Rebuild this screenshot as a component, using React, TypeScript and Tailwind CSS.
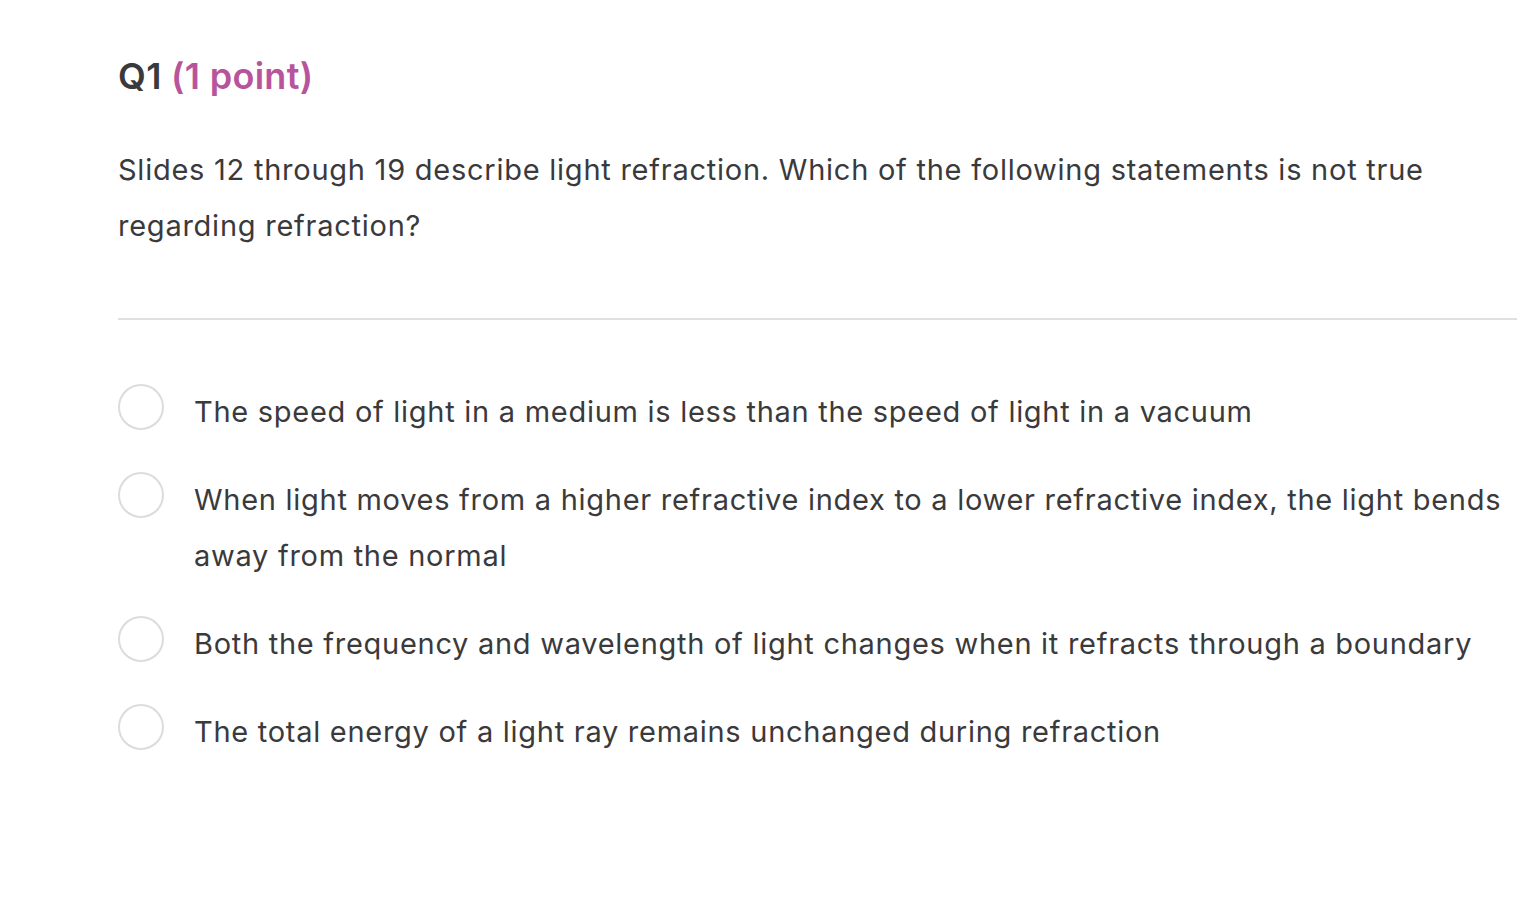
import React from 'react';

const options = [
  'The speed of light in a medium is less than the speed of light in a vacuum',
  'When light moves from a higher refractive index to a lower refractive index, the light bends away from the normal',
  'Both the frequency and wavelength of light changes when it refracts through a boundary',
  'The total energy of a light ray remains unchanged during refraction',
];

const Radio: React.FC = () => (
  <span className="block w-[46px] h-[46px] shrink-0 rounded-full border-2 border-[#dcdce0] bg-white" />
);

export default function App() {
  return (
    <div
      className="min-h-screen bg-white pl-[118px] pr-[21px] pt-[56px] text-[#3a3a3c]"
      style={{ fontFamily: 'Inter, "Noto Sans", sans-serif' }}
    >
      <h1 className="text-[36px] leading-[40px] font-semibold tracking-[0.3px]">
        <span className="text-[#3a3a3c]">Q1</span>{' '}
        <span className="text-[#b8549c]">(1 point)</span>
      </h1>

      <p className="mt-[46px] text-[29px] leading-[56px] tracking-[0.75px]">
        Slides 12 through 19 describe light refraction. Which of the following statements is not true regarding
        refraction?
      </p>

      <div className="mt-[64px] h-[2px] bg-[#e0e0e4]" />

      <div className="mt-[64px] flex flex-col gap-[32px]">
        {options.map((o) => (
          <label key={o} className="flex items-start gap-[30px] cursor-pointer">
            <Radio />
            <span className="text-[29px] leading-[56px] tracking-[0.72px]">{o}</span>
          </label>
        ))}
      </div>
    </div>
  );
}
